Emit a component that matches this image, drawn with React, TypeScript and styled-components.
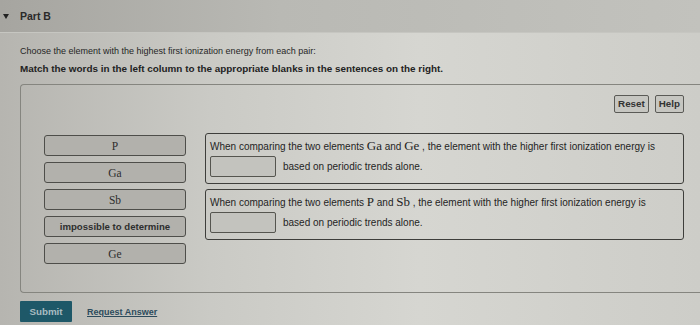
import styled, { createGlobalStyle } from "styled-components";

const GlobalStyle = createGlobalStyle`
  html, body {
    margin: 0;
    padding: 0;
    width: 700px;
    height: 325px;
    overflow: hidden;
  }
  body {
    font-family: "Liberation Sans", Arial, sans-serif;
    color: #1e1e1e;
  }
`;

const tiles = ["P", "Ga", "Sb", "impossible to determine", "Ge"];

const sentences = [
  { a: "Ga", b: "Ge" },
  { a: "P", b: "Sb" },
];

const App = () => {
  return (
    <>
      <GlobalStyle />
      <Page>
        <Header>
          <Caret />
          <PartTitle>Part B</PartTitle>
        </Header>

        <Content>
          <Prompt>Choose the element with the highest first ionization energy from each pair:</Prompt>
          <Instruction>Match the words in the left column to the appropriate blanks in the sentences on the right.</Instruction>

          <Panel>
            <Toolbar>
              <ToolButton>Reset</ToolButton>
              <ToolButton>Help</ToolButton>
            </Toolbar>

            <Board>
              <TileColumn>
                {tiles.map((t) => (
                  <Tile key={t} $word={t.length > 3}>
                    {t}
                  </Tile>
                ))}
              </TileColumn>

              <SentenceColumn>
                {sentences.map((s, i) => (
                  <SentenceBox key={i}>
                    <SentenceLine>
                      When comparing the two elements <Sym>{s.a}</Sym> and <Sym>{s.b}</Sym> , the element with the
                      higher first ionization energy is
                    </SentenceLine>
                    <BlankRow>
                      <Blank />
                      <span>based on periodic trends alone.</span>
                    </BlankRow>
                  </SentenceBox>
                ))}
              </SentenceColumn>
            </Board>
          </Panel>

          <Footer>
            <SubmitButton>Submit</SubmitButton>
            <RequestLink>Request Answer</RequestLink>
          </Footer>
        </Content>
      </Page>
    </>
  );
};

const Page = styled.div`
  width: 700px;
  height: 325px;
  overflow: hidden;
  background: linear-gradient(90deg, #b6b5b0 0%, #cacac5 30%, #d6d6d1 60%, #cdcdc8 100%);
`;

const Header = styled.div`
  height: 33px;
  display: flex;
  align-items: center;
  background: linear-gradient(90deg, #a6a5a0 0%, #b9b9b4 40%, #c2c2bd 100%);
  border-bottom: 1px solid #c6c6c1;
  box-sizing: border-box;
`;

const Caret = styled.span`
  width: 0;
  height: 0;
  margin: 0 11px 0 3px;
  border-left: 3.5px solid transparent;
  border-right: 3.5px solid transparent;
  border-top: 5px solid #222;
`;

const PartTitle = styled.span`
  font-size: 10.5px;
  font-weight: bold;
  color: #2a2a2a;
`;

const Content = styled.div`
  padding-left: 20px;
`;

const Prompt = styled.div`
  margin-top: 12px;
  font-size: 9px;
  line-height: 12px;
  color: #262626;
`;

const Instruction = styled.div`
  margin-top: 6px;
  font-size: 9.9px;
  line-height: 12px;
  font-weight: bold;
  color: #222;
`;

const Panel = styled.div`
  margin-top: 9px;
  width: 700px;
  height: 209px;
  box-sizing: border-box;
  border: 1px solid #85857f;
  border-right: none;
  border-top-left-radius: 4px;
  border-bottom-left-radius: 4px;
  padding: 10px 0 0 23px;
`;

const Toolbar = styled.div`
  display: flex;
  justify-content: flex-end;
  gap: 6px;
  padding-right: 36px;
`;

const ToolButton = styled.div`
  height: 16px;
  padding: 0 3px;
  border: 1.5px solid #5a5a56;
  border-radius: 2px;
  background: #c6c6c1;
  font-size: 9.8px;
  font-weight: bold;
  line-height: 16px;
  color: #333;
`;

const Board = styled.div`
  margin-top: 20px;
  display: flex;
  gap: 19px;
`;

const TileColumn = styled.div`
  display: flex;
  flex-direction: column;
  gap: 6px;
  padding-top: 2px;
  width: 142px;
`;

const Tile = styled.div<{ $word?: boolean }>`
  height: 21px;
  box-sizing: border-box;
  border: 1.5px solid #4e4e4a;
  border-radius: 3px;
  background: #b2b1ac;
  display: flex;
  align-items: center;
  justify-content: center;
  font-family: ${(p) => (p.$word ? `"Liberation Sans", Arial, sans-serif` : `"Liberation Serif", "Times New Roman", serif`)};
  font-size: ${(p) => (p.$word ? "9.6px" : "11.5px")};
  font-weight: ${(p) => (p.$word ? "bold" : "normal")};
  color: #2e2e2e;
`;

const SentenceColumn = styled.div`
  width: 479px;
  display: flex;
  flex-direction: column;
  gap: 5px;
`;

const SentenceBox = styled.div`
  height: 51px;
  box-sizing: border-box;
  border: 1.5px solid #3e3e3b;
  border-radius: 3px;
  padding: 6px 4px 0 4px;
  font-size: 10px;
  color: #1f1f1f;
`;

const SentenceLine = styled.div`
  line-height: 12px;
  white-space: nowrap;
`;

const Sym = styled.span`
  font-family: "Liberation Serif", "Times New Roman", serif;
  font-size: 13px;
`;

const BlankRow = styled.div`
  margin-top: 3px;
  display: flex;
  align-items: center;
  gap: 7px;
  line-height: 12px;
`;

const Blank = styled.div`
  width: 66px;
  height: 21px;
  box-sizing: border-box;
  border: 1.5px solid #55554f;
  border-radius: 2px;
  background: #c3c3be;
`;

const Footer = styled.div`
  margin-top: 8px;
  display: flex;
  align-items: center;
  gap: 15px;
`;

const SubmitButton = styled.div`
  width: 52px;
  height: 21px;
  background: #1e5868;
  color: #a9bcc1;
  font-size: 9.8px;
  font-weight: bold;
  line-height: 21px;
  text-align: center;
  border-radius: 1px;
`;

const RequestLink = styled.span`
  font-size: 9px;
  font-weight: bold;
  color: #2d4b5c;
  text-decoration: underline;
`;

export default App;
